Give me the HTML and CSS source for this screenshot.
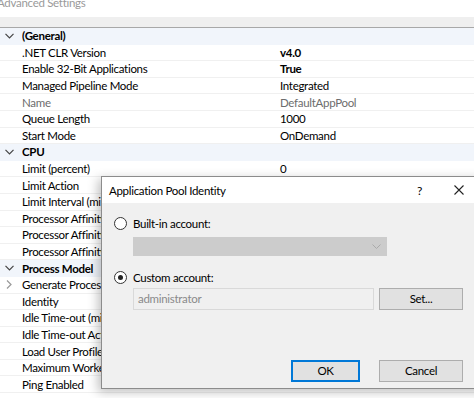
FILE: index.html
```html
<!DOCTYPE html>
<html lang="en">
<head>
    <meta charset="UTF-8">
    <title>Advanced Settings</title>
    <link rel="stylesheet" href="styles.css">
</head>
<body>

<div class="window-title">Advanced Settings</div>

<div class="grid">
    <div class="grid-head"></div>

    <div class="row cat"><span class="exp"><svg width="9" height="6" viewBox="0 0 9 6"><polyline points="0.5,0.8 4.5,4.8 8.5,0.8" fill="none" stroke="#444" stroke-width="1.2"/></svg></span><span class="name">(General)</span><span class="val"></span></div>
    <div class="row"><span class="exp"></span><span class="name">.NET CLR Version</span><span class="val bold">v4.0</span></div>
    <div class="row"><span class="exp"></span><span class="name">Enable 32-Bit Applications</span><span class="val bold">True</span></div>
    <div class="row"><span class="exp"></span><span class="name">Managed Pipeline Mode</span><span class="val">Integrated</span></div>
    <div class="row ro"><span class="exp"></span><span class="name">Name</span><span class="val">DefaultAppPool</span></div>
    <div class="row"><span class="exp"></span><span class="name">Queue Length</span><span class="val">1000</span></div>
    <div class="row"><span class="exp"></span><span class="name">Start Mode</span><span class="val">OnDemand</span></div>

    <div class="row cat"><span class="exp"><svg width="9" height="6" viewBox="0 0 9 6"><polyline points="0.5,0.8 4.5,4.8 8.5,0.8" fill="none" stroke="#444" stroke-width="1.2"/></svg></span><span class="name">CPU</span><span class="val"></span></div>
    <div class="row"><span class="exp"></span><span class="name">Limit (percent)</span><span class="val">0</span></div>
    <!-- rows below are mostly hidden behind the dialog -->
    <div class="row"><span class="exp"></span><span class="name short">Limit Action</span></div>
    <div class="row"><span class="exp"></span><span class="name short">Limit Interval (mi</span></div>
    <div class="row"><span class="exp"></span><span class="name short">Processor Affinity</span></div>
    <div class="row"><span class="exp"></span><span class="name short">Processor Affinity</span></div>
    <div class="row"><span class="exp"></span><span class="name short">Processor Affinity</span></div>

    <div class="row cat"><span class="exp"><svg width="9" height="6" viewBox="0 0 9 6"><polyline points="0.5,0.8 4.5,4.8 8.5,0.8" fill="none" stroke="#444" stroke-width="1.2"/></svg></span><span class="name short">Process Model</span></div>
    <div class="row"><span class="exp"><svg width="6" height="9" viewBox="0 0 6 9"><polyline points="1,0.5 5,4.5 1,8.5" fill="none" stroke="#999" stroke-width="1.2"/></svg></span><span class="name short">Generate Process</span></div>
    <div class="row"><span class="exp"></span><span class="name short">Identity</span></div>
    <div class="row"><span class="exp"></span><span class="name short">Idle Time-out (mi</span></div>
    <div class="row"><span class="exp"></span><span class="name short">Idle Time-out Act</span></div>
    <div class="row"><span class="exp"></span><span class="name short">Load User Profile</span></div>
    <div class="row"><span class="exp"></span><span class="name short">Maximum Worke</span></div>
    <div class="row"><span class="exp"></span><span class="name short">Ping Enabled</span></div>
</div>

<div class="dialog">
    <div class="dlg-title">
        <span class="dlg-caption">Application Pool Identity</span>
        <span class="dlg-help">?</span>
        <span class="dlg-close"><svg width="10" height="10" viewBox="0 0 10 10"><path d="M0.5 0.5 L9.5 9.5 M9.5 0.5 L0.5 9.5" stroke="#222" stroke-width="1.1" fill="none"/></svg></span>
    </div>
    <div class="dlg-body">
        <label class="radio-line"><span class="radio"></span>Built-in account:</label>
        <div class="combo-line">
            <div class="combo"><svg width="9" height="5" viewBox="0 0 9 5"><polyline points="0.5,0.5 4.5,4.5 8.5,0.5" fill="none" stroke="#aaa" stroke-width="1"/></svg></div>
        </div>

        <label class="radio-line second"><span class="radio checked"></span>Custom account:</label>
        <div class="account-line">
            <div class="textbox">administrator</div>
            <div class="btn">Set...</div>
        </div>

        <div class="dlg-buttons">
            <div class="btn default">OK</div>
            <div class="btn">Cancel</div>
        </div>
    </div>
</div>

</body>
</html>
```

FILE: styles.css
```css
body {
    margin: 0;
    padding: 0;
    font-family: Lato, "Liberation Sans", sans-serif;
    font-size: 11.5px;
    letter-spacing: -0.3px;
    color: #000;
    background: #fff;
    position: relative;
    overflow: hidden;
    height: 398px;
}

.window-title {
    height: 17px;
    line-height: 6px;
    margin-left: -3px;
    color: #9a9a9a;
    overflow: hidden;
}

.grid-head {
    height: 10px;
    background: #efefef;
    border-bottom: 1px solid #a8a8a8;
}

.row {
    display: flex;
    align-items: center;
    height: 16.6px;
    border-bottom: 1px solid #f0f0f0;
    box-sizing: border-box;
    white-space: nowrap;
}

.row.cat {
    background: #f1f5fb;
    border-bottom-color: #f1f5fb;
    font-weight: bold;
}

.exp {
    width: 22px;
    flex: none;
    display: flex;
    align-items: center;
    justify-content: center;
    padding-right: 4px;
    box-sizing: border-box;
}

.name {
    width: 258px;
    flex: none;
    overflow: hidden;
}

/* names that run under the dialog */
.name.short {
    width: auto;
    overflow: visible;
}

.val {
    flex: 1;
}

.bold {
    font-weight: bold;
}

.row.ro {
    color: #6d6d6d;
}

/* dialog over the grid */
.dialog {
    position: absolute;
    left: 101px;
    top: 176px;
    width: 390px;
    height: 211px;
    border: 1px solid #8c8c8c;
    background: #f0f0f0;
    box-shadow: -3px 3px 10px rgba(0, 0, 0, 0.25);
}

.dlg-title {
    height: 26px;
    background: #fff;
    display: flex;
    align-items: center;
    padding-left: 7px;
}

.dlg-caption {
    flex: 1;
}

.dlg-help {
    width: 37px;
    font-size: 12px;
}

.dlg-close {
    width: 38px;
    display: flex;
    align-items: center;
}

.dlg-body {
    padding: 12px 0 0 12px;
}

.radio-line {
    display: flex;
    align-items: center;
    height: 16px;
    gap: 6px;
}

.radio-line.second {
    margin-top: 13px;
}

.radio {
    width: 11px;
    height: 11px;
    border: 1px solid #333;
    border-radius: 50%;
    background: #fff;
    position: relative;
}

.radio.checked::after {
    content: "";
    position: absolute;
    left: 3px;
    top: 3px;
    width: 5px;
    height: 5px;
    border-radius: 50%;
    background: #222;
}

.combo-line {
    padding: 6px 0 0 19px;
}

.combo {
    width: 254px;
    height: 19px;
    background: #cccccc;
    display: flex;
    align-items: center;
    justify-content: flex-end;
    padding-right: 6px;
    box-sizing: border-box;
}

.account-line {
    display: flex;
    gap: 5px;
    padding: 3px 0 0 19px;
}

.textbox {
    width: 241px;
    height: 22px;
    box-sizing: border-box;
    border: 1px solid #d9d9d9;
    background: #f0f0f0;
    color: #8a8a8a;
    padding-left: 4px;
    line-height: 20px;
}

.btn {
    width: 84px;
    height: 22px;
    box-sizing: border-box;
    border: 1px solid #adadad;
    background: #e1e1e1;
    text-align: center;
    line-height: 20px;
}

.dlg-buttons {
    display: flex;
    gap: 19px;
    padding: 50px 0 0 177px;
}

.btn.default {
    width: 69px;
    border: 2px solid #0078d7;
    line-height: 18px;
}
```
